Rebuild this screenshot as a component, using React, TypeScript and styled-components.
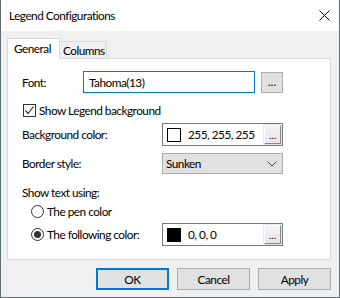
import React from 'react'
import styled, { createGlobalStyle } from 'styled-components'

const Global = createGlobalStyle`
  html, body { margin: 0; padding: 0; background: #f0f0f0; }
  * { box-sizing: border-box; }
  body {
    font-family: Lato, "Noto Sans", Arial, sans-serif;
    font-size: 11.8px;
    letter-spacing: -0.5px;
    color: #000;
  }
`

const Window = styled.div`
  width: 340px;
  height: 298px;
  background: #f0f0f0;
  border: 1px solid #5f6d74;
  border-top: none;
  display: flex;
  flex-direction: column;
`

const TitleBar = styled.div`
  height: 31px;
  background: #fff;
  display: flex;
  align-items: center;
  justify-content: space-between;
  padding: 0 9px 1px 8px;
`

const CloseIcon = () => (
  <svg width="11" height="11" viewBox="0 0 11 11">
    <path d="M0.5 0.5 L10.5 10.5 M10.5 0.5 L0.5 10.5" stroke="#000" strokeWidth="1" />
  </svg>
)

const Body = styled.div`
  flex: 1;
  display: flex;
  flex-direction: column;
  padding: 7px 8px 0 6px;
`

const TabRow = styled.div`
  display: flex;
  align-items: flex-end;
  height: 21px;
  position: relative;
  z-index: 1;
  margin-bottom: -1px;
`

const Tab = styled.div<{ $active?: boolean }>`
  height: ${p => (p.$active ? '21px' : '18px')};
  width: ${p => (p.$active ? '53px' : '48px')};
  background: ${p => (p.$active ? '#fff' : '#f0f0f0')};
  border: 1px solid #d9d9d9;
  border-bottom: ${p => (p.$active ? 'none' : '1px solid #d9d9d9')};
  margin-left: ${p => (p.$active ? '0' : '-1px')};
  padding: ${p => (p.$active ? '2px 0 0 6px' : '1px 0 0 3px')};
  line-height: 16px;
`

const Panel = styled.div`
  width: 324px;
  height: 202px;
  background: #fff;
  border: 1px solid #d9d9d9;
  padding: 12px 0 0 14px;
  display: flex;
  flex-direction: column;
`

const Row = styled.div<{ $h: number; $mt?: number; $indent?: number }>`
  display: flex;
  align-items: center;
  height: ${p => p.$h}px;
  margin-top: ${p => p.$mt ?? 0}px;
  padding-left: ${p => p.$indent ?? 0}px;
`

const Label = styled.div<{ $w?: number }>`
  width: ${p => (p.$w ? `${p.$w}px` : 'auto')};
  flex-shrink: 0;
  white-space: nowrap;
`

const TextInput = styled.div`
  width: 172px;
  height: 22px;
  border: 1px solid #0078d7;
  padding: 0 0 0 5px;
  display: flex;
  align-items: center;
`

const DotsButton = styled.div`
  width: 22px;
  height: 21px;
  margin-left: 6px;
  background: #e1e1e1;
  border: 1px solid #adadad;
  display: flex;
  align-items: flex-end;
  justify-content: center;
  padding-bottom: 4px;
  line-height: 1;
  letter-spacing: 0;
`

const CheckBox = styled.div`
  width: 13px;
  height: 13px;
  border: 1px solid #333;
  background: #fff;
  margin: 0 3px 0 1px;
  display: flex;
  align-items: center;
  justify-content: center;
`

const Radio = styled.div<{ $on?: boolean }>`
  width: 13px;
  height: 13px;
  border-radius: 50%;
  border: 1px solid #333;
  background: #fff;
  margin-right: 3px;
  display: flex;
  align-items: center;
  justify-content: center;
  &::after {
    content: '';
    display: ${p => (p.$on ? 'block' : 'none')};
    width: 7px;
    height: 7px;
    border-radius: 50%;
    background: #333;
  }
`

const ColorBox = styled.div`
  width: 121px;
  height: 23px;
  border: 1px solid #7a7a7a;
  background: #fff;
  display: flex;
  align-items: center;
  padding: 0 0 0 4px;
`

const Swatch = styled.div<{ $color: string }>`
  width: 14px;
  height: 14px;
  border: 1px solid #000;
  background: ${p => p.$color};
  margin-right: 7px;
`

const ColorText = styled.div`
  flex: 1;
  white-space: nowrap;
`

const SmallDots = styled.div`
  width: 17px;
  height: 19px;
  margin-right: 1px;
  background: linear-gradient(#f4f4f4, #e6e6e6);
  border: 1px solid;
  border-color: #fff #8a8a8a #8a8a8a #fff;
  box-shadow: 0 0 0 0.5px #cfcfcf;
  display: flex;
  align-items: flex-end;
  justify-content: center;
  padding-bottom: 3px;
  font-size: 10px;
  letter-spacing: 0;
  line-height: 1;
`

const Select = styled.div`
  width: 121px;
  height: 21px;
  border: 1px solid #adadad;
  background: #e1e1e1;
  display: flex;
  align-items: center;
  justify-content: space-between;
  padding: 0 5px 0 3px;
`

const Chevron = () => (
  <svg width="10" height="6" viewBox="0 0 10 6">
    <path d="M0.5 0.5 L5 5 L9.5 0.5" fill="none" stroke="#444" strokeWidth="1" />
  </svg>
)

const Footer = styled.div`
  display: flex;
  justify-content: flex-end;
  gap: 8px;
  margin-top: 8px;
`

const Button = styled.div<{ $default?: boolean }>`
  width: 73px;
  height: 22px;
  background: #e1e1e1;
  border: ${p => (p.$default ? '2px solid #0078d7' : '1px solid #adadad')};
  display: flex;
  align-items: center;
  justify-content: center;
`

export default function App() {
  return (
    <>
      <Global />
      <Window>
        <TitleBar>
          <span>Legend Configurations</span>
          <CloseIcon />
        </TitleBar>
        <Body>
          <TabRow>
            <Tab $active>General</Tab>
            <Tab>Columns</Tab>
          </TabRow>
          <Panel>
            <Row $h={22}>
              <Label $w={61}>Font:</Label>
              <TextInput>Tahoma(13)</TextInput>
              <DotsButton>...</DotsButton>
            </Row>
            <Row $h={16} $mt={9}>
              <CheckBox>
                <svg width="11" height="11" viewBox="0 0 11 11">
                  <path d="M1.5 5.5 L4 8.5 L9.5 1.5" fill="none" stroke="#333" strokeWidth="1.2" />
                </svg>
              </CheckBox>
              <Label>Show Legend background</Label>
            </Row>
            <Row $h={23} $mt={5}>
              <Label $w={140}>Background color:</Label>
              <ColorBox>
                <Swatch $color="#fff" />
                <ColorText>255, 255, 255</ColorText>
                <SmallDots>...</SmallDots>
              </ColorBox>
            </Row>
            <Row $h={21} $mt={7}>
              <Label $w={140}>Border style:</Label>
              <Select>
                <span>Sunken</span>
                <Chevron />
              </Select>
            </Row>
            <Row $h={16} $mt={10}>
              <Label>Show text using:</Label>
            </Row>
            <Row $h={16} $mt={3} $indent={9}>
              <Radio />
              <Label>The pen color</Label>
            </Row>
            <Row $h={23} $mt={4} $indent={9}>
              <Radio $on />
              <Label $w={115}>The following color:</Label>
              <ColorBox>
                <Swatch $color="#000" />
                <ColorText>0, 0, 0</ColorText>
                <SmallDots>...</SmallDots>
              </ColorBox>
            </Row>
          </Panel>
          <Footer>
            <Button $default>OK</Button>
            <Button>Cancel</Button>
            <Button>Apply</Button>
          </Footer>
        </Body>
      </Window>
    </>
  )
}
